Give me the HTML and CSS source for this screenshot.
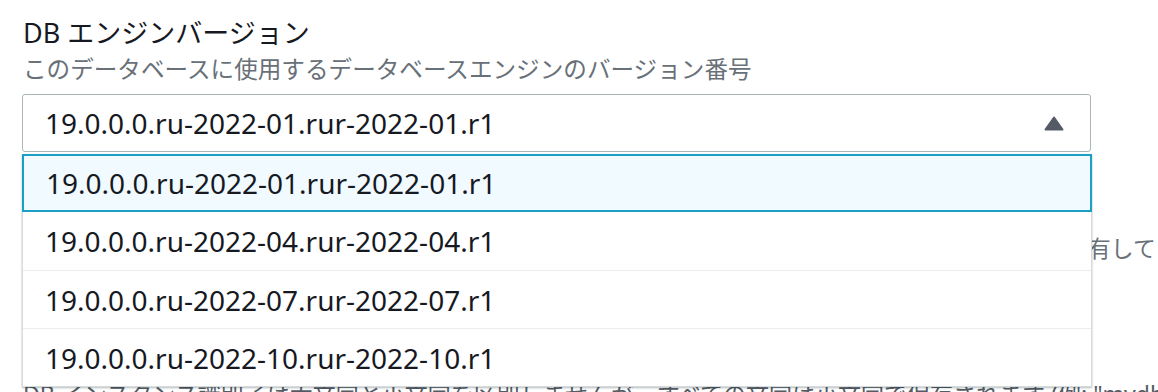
FILE: index.html
```html
<!DOCTYPE html>
<html lang="ja">
<head>
<meta charset="utf-8">
<title>DB エンジンバージョン</title>
<link rel="stylesheet" href="styles.css">
</head>
<body>
<div class="page">
  <div class="field">
    <div class="label">DB エンジンバージョン</div>
    <div class="desc">このデータベースに使用するデータベースエンジンのバージョン番号</div>
    <div class="select-wrap">
      <div class="select">
        <span class="select-value">19.0.0.0.ru-2022-01.rur-2022-01.r1</span>
        <svg class="caret" width="20" height="15" viewBox="0 0 20 15"><path d="M10 1.5 L18.5 13.5 L1.5 13.5 Z" fill="#545b64" stroke="#545b64" stroke-width="2" stroke-linejoin="round"/></svg>
      </div>
      <ul class="dropdown">
        <li class="option selected">19.0.0.0.ru-2022-01.rur-2022-01.r1</li>
        <li class="option">19.0.0.0.ru-2022-04.rur-2022-04.r1</li>
        <li class="option">19.0.0.0.ru-2022-07.rur-2022-07.r1</li>
        <li class="option">19.0.0.0.ru-2022-10.rur-2022-10.r1</li>
      </ul>
    </div>
  </div>
  <div class="field under">
    <div class="label">DB インスタンス識別子</div>
    <div class="desc small">DB インスタンスの名前を入力してください。名前は、現在の AWS リージョン内で AWS アカウントが所有しているすべての DB インスタンスにおいて一意である必要があります。</div>
    <div class="input"></div>
    <div class="hint">DB インスタンス識別子は大文字と小文字を区別しませんが、すべての文字は小文字で保存されます (例: "mydbinstance")。</div>
  </div>
</div>
</body>
</html>
```
FILE: styles.css
```css
html, body {
  margin: 0;
  padding: 0;
  background: #ffffff;
  overflow: hidden;
}
body {
  font-family: "Noto Sans", "Noto Sans CJK JP", sans-serif;
  color: #16191f;
}
.page {
  padding: 16px 0 0 23px;
  width: 1400px;
}
.label {
  font-size: 27px;
  line-height: 34px;
  color: #16191f;
  white-space: nowrap;
}
.desc {
  font-size: 23.6px;
  line-height: 34px;
  margin-top: 2px;
  color: #687078;
  white-space: nowrap;
}
.select-wrap {
  position: relative;
  margin-top: 8px;
  margin-left: -1px;
  width: 1069px;
}
.select {
  box-sizing: border-box;
  height: 58px;
  border: 1px solid #aab7b8;
  border-radius: 3px;
  display: flex;
  align-items: center;
  justify-content: space-between;
  padding: 0 26px 0 22px;
  font-size: 28px;
}
.caret {
  display: block;
}
.dropdown {
  position: absolute;
  z-index: 2;
  top: 60px;
  left: 0;
  width: 1070px;
  box-sizing: border-box;
  margin: 0;
  padding: 0;
  list-style: none;
  background: #ffffff;
  border: 1px solid #d5dbdb;
  border-top: none;
  box-shadow: 0 1px 2px rgba(0, 28, 36, 0.3);
}
.option {
  box-sizing: border-box;
  height: 58px;
  display: flex;
  align-items: center;
  padding-left: 22px;
  font-size: 28px;
  border-top: 1px solid #eaeded;
}
.option.selected {
  background: #f1faff;
  border: 2px solid #1a9fc7;
  margin: 0 -1px;
  padding-left: 22px;
}
.option.selected + .option {
  border-top: none;
}
.under {
  margin-top: 43px;
}
.under .desc.small {
  font-size: 22.8px;
  margin-top: 3px;
}
.input {
  height: 58px;
  width: 800px;
  margin-top: 14px;
  border: 1px solid #aab7b8;
  border-radius: 3px;
}
.hint {
  font-size: 23px;
  line-height: 34px;
  margin-top: 37px;
  color: #545b64;
  white-space: nowrap;
}
```
